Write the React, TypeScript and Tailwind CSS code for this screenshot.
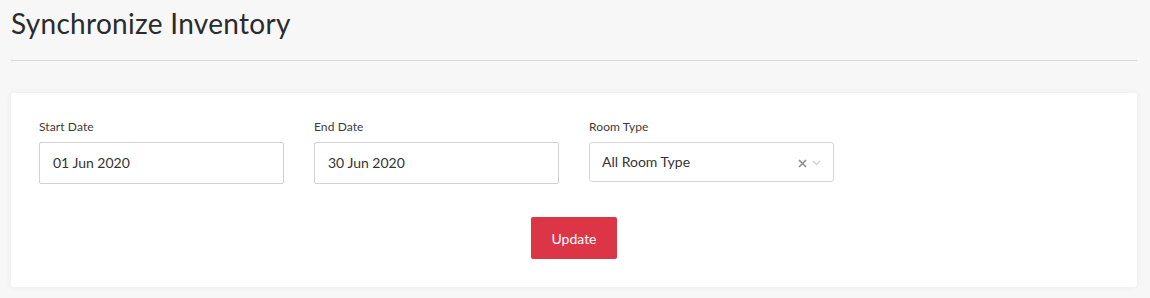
import React from "react";

// Simple field wrapper: label + control
function Field({ label, children }: { label: string; children: React.ReactNode }) {
  return (
    <div className="flex w-[245px] flex-col">
      <label className="mb-[7px] text-[12px] leading-[16px] tracking-[0.1px] text-[#3b3b3b]">{label}</label>
      {children}
    </div>
  );
}

function DateInput({ value }: { value: string }) {
  return (
    <div className="flex h-[42px] items-center rounded-[2px] border border-[#d2d2d2] bg-white px-[13px] pb-[1px] text-[14px] text-[#333]">
      {value}
    </div>
  );
}

export default function App() {
  return (
    <div
      className="min-h-[298px] w-[1150px] bg-[#f7f7f7] pr-[13px] pl-[11px] pt-[5px]"
      style={{ fontFamily: "Lato, 'Noto Sans', sans-serif" }}
    >
      <h1 className="text-[28px] leading-[36px] font-normal tracking-[0.3px] text-[#2b2b2b]">Synchronize Inventory</h1>
      <div className="mt-[19px] border-t border-[#d9d9d9]" />

      <div className="mt-[32px] rounded-[3px] bg-white px-[28px] pt-[26px] pb-[28px] shadow-[0_0_6px_rgba(0,0,0,0.06)]">
        <div className="flex items-start gap-[30px]">
          <Field label="Start Date">
            <DateInput value="01 Jun 2020" />
          </Field>
          <Field label="End Date">
            <DateInput value="30 Jun 2020" />
          </Field>
          <Field label="Room Type">
            <div className="flex h-[40px] items-center justify-between rounded-[3px] border border-[#d6d6d6] bg-white pr-[12px] pl-[12px] pb-[1px] text-[14px] text-[#333]">
              <span>All Room Type</span>
              <div className="flex items-center gap-[5px] pt-[3px]">
                <svg width="9" height="9" viewBox="0 0 9 9">
                  <path d="M1 1L8 8M8 1L1 8" stroke="#8a8a8a" strokeWidth="1.5" />
                </svg>
                <svg width="9" height="6" viewBox="0 0 9 6">
                  <path d="M1 1L4.5 4.5L8 1" stroke="#cfcfcf" strokeWidth="1.3" fill="none" />
                </svg>
              </div>
            </div>
          </Field>
        </div>

        <div className="mt-[33px] flex justify-center">
          <button className="h-[42px] w-[86px] rounded-[2px] bg-[#dc3545] text-[14px] text-white">Update</button>
        </div>
      </div>
    </div>
  );
}
